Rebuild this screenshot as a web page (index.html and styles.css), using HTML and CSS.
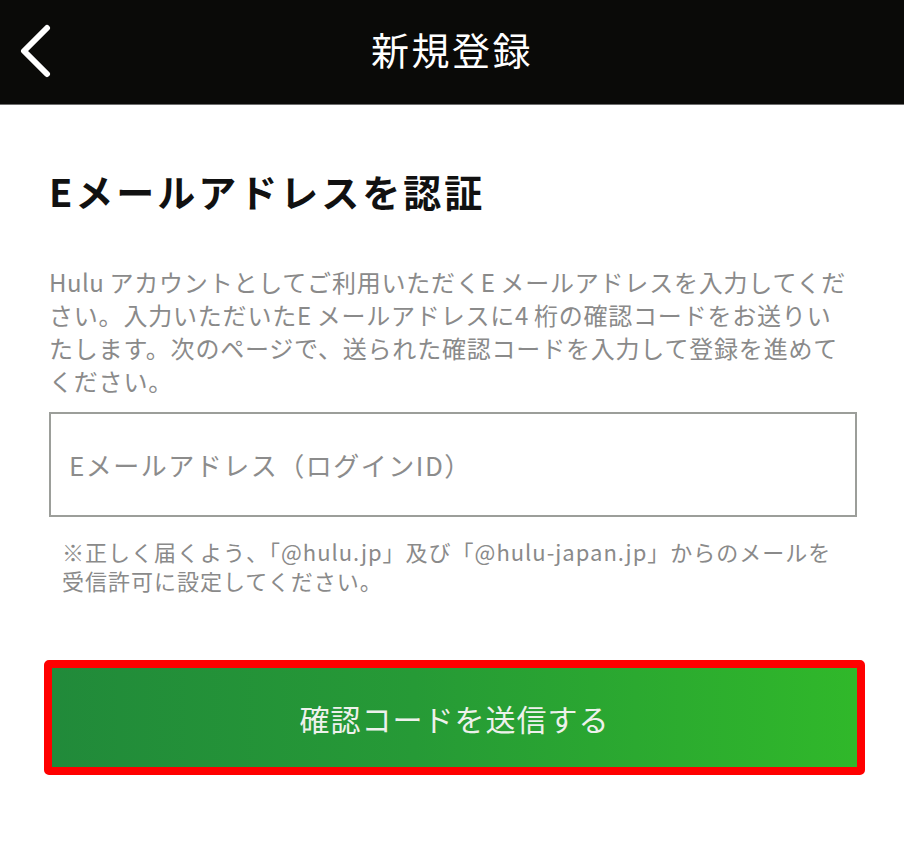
FILE: index.html
```html
<!DOCTYPE html>
<html lang="ja">
<head>
<meta charset="utf-8">
<title>新規登録</title>
<link rel="stylesheet" href="styles.css">
</head>
<body>
<header class="topbar">
  <a class="back" href="#" aria-label="戻る">
    <svg width="40" height="60" viewBox="0 0 40 60"><path d="M27 5 L4 28 L27 51" fill="none" stroke="#fff" stroke-width="6" stroke-linecap="round" stroke-linejoin="round"/></svg>
  </a>
  <h1 class="topbar-title">新規登録</h1>
</header>
<main class="content">
  <h2 class="heading">Eメールアドレスを認証</h2>
  <p class="lead"><span class="lat">Hulu</span>アカウントとしてご利用いただく<span class="lat">E</span>メールアドレスを入力してくだ<br>さい。入力いただいた<span class="lat">E</span>メールアドレスに<span class="lat">4</span>桁の確認コードをお送りい<br>たします。次のページで、送られた確認コードを入力して登録を進めて<br>ください。</p>
  <div class="field"><span class="placeholder">Eメールアドレス（ログインID）</span></div>
  <p class="note">※正しく届くよう、「@hulu.jp」及び「@hulu-japan.jp」からのメールを<br>受信許可に設定してください。</p>
  <button class="submit" type="button">確認コードを送信する</button>
</main>
</body>
</html>
```
FILE: styles.css
```css
* { box-sizing: border-box; }
html, body { margin: 0; padding: 0; background: #fff; }
body {
  font-family: "Noto Sans CJK JP", "Noto Sans", sans-serif;
  width: 904px;
  min-height: 866px;
}
.topbar {
  position: relative;
  height: 105px;
  background: #0a0a08;
  border-bottom: 1px solid #6e6e6e;
  display: flex;
  align-items: center;
  justify-content: center;
}
.back {
  position: absolute;
  left: 20px;
  top: 23px;
  display: block;
  width: 40px;
  height: 60px;
}
.back svg { display: block; }
.topbar-title {
  margin: 0 0 6px;
  color: #fff;
  font-size: 38px;
  font-weight: 400;
  letter-spacing: 2.5px;
  line-height: 1;
}
.content {
  padding: 0 47px 0 49px;
}
.heading {
  margin: 62px 0 0;
  font-size: 38px;
  line-height: 48px;
  font-weight: 700;
  color: #111;
  letter-spacing: 3px;
}
.lead {
  margin: 50px 0 0;
  font-size: 24px;
  line-height: 33px;
  letter-spacing: 0.8px;
  color: #8a8a8a;
  white-space: nowrap;
}
.lat {
  letter-spacing: 0.5px;
  margin-right: 5px;
}
.field {
  margin-top: 15px;
  height: 105px;
  border: 2px solid #9c9e9a;
  display: flex;
  align-items: center;
  padding-left: 18px;
}
.placeholder {
  font-size: 26px;
  color: #8c8c8c;
  letter-spacing: 1.5px;
}
.note {
  margin: 20px 0 0;
  padding-left: 13px;
  font-size: 22px;
  line-height: 29px;
  letter-spacing: 1px;
  color: #8a8a8a;
  white-space: nowrap;
}
.submit {
  display: block;
  margin: 65px -8px 0 -5px;
  width: calc(100% + 13px);
  height: 115px;
  border: 8px solid #ff0000;
  border-radius: 5px;
  background: linear-gradient(90deg, #218a3a 0%, #269a36 45%, #30b82a 100%);
  color: #eef1ec;
  font-family: "Noto Sans CJK JP", "Noto Sans", sans-serif;
  font-size: 30px;
  letter-spacing: 1px;
  padding: 0;
}
```
